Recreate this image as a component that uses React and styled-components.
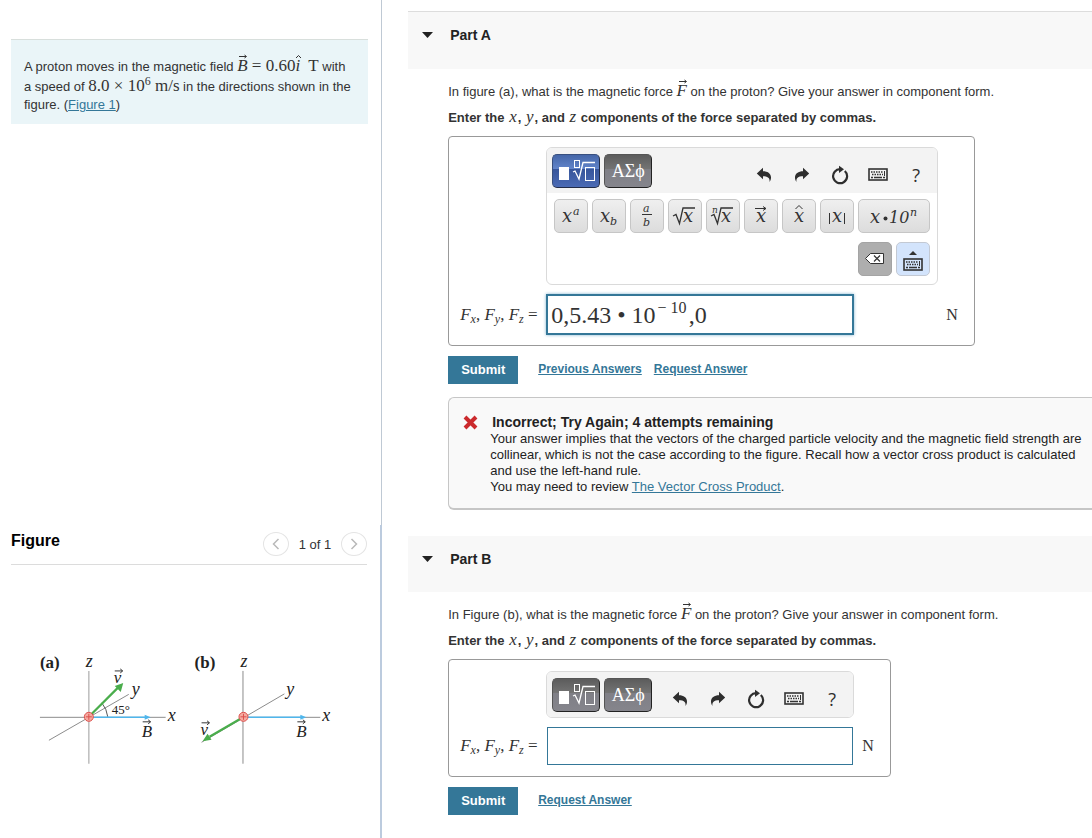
import React, { useState } from "react";
import styled, { createGlobalStyle, css } from "styled-components";

const sans = '"Liberation Sans", Arial, Helvetica, sans-serif';
const serif = '"Liberation Serif", "Times New Roman", serif';
const slab = '"DejaVu Serif", "Liberation Serif", serif';
const blue = "#347798";

const GlobalStyle = createGlobalStyle`
  * { box-sizing: border-box; }
  body { margin: 0; background: #fff; color: #333; font: 13px/16px ${sans}; }
  button, input { font: inherit; color: inherit; }
  a { color: ${blue}; }
  h2, p { margin: 0; }
`;

const Page = styled.div`
  display: grid;
  grid-template-columns: 35% minmax(0, 1fr);
  min-height: 100vh;
`;

/* ---------- left column ---------- */

const Side = styled.aside`
  display: flex;
  flex-direction: column;
`;

const ProblemPane = styled.section`
  min-height: 525px;
  padding: 39px 13px 0 11px;
  border-right: 1px solid #bfc9d4;
`;

const Problem = styled.p`
  padding: 16px 14px 11px 13px;
  border-top: 1px solid #d8dfdc;
  background: #eaf5f8;
  line-height: 17px;
`;

const FigurePane = styled.section`
  flex: 1;
  padding: 6px 13px 0 11px;
  border-right: 2px solid #bccbde;
`;

const FigureHead = styled.header`
  display: flex;
  align-items: center;
  justify-content: space-between;
  height: 34px;
  padding-bottom: 8px;
  border-bottom: 1px solid #dcdcdc;
`;

const FigureTitle = styled.h2`
  padding-bottom: 6px;
  font-size: 16px;
  line-height: 18px;
  color: #000;
`;

const Pager = styled.nav`
  display: flex;
  align-items: center;
  gap: 10px;
`;

const PagerButton = styled.button`
  display: grid;
  place-items: center;
  width: 26px;
  height: 24px;
  padding: 0;
  border: 1px solid #e4e4e4;
  border-radius: 50%;
  background: #fff;
`;

const PagerText = styled.span`
  padding-top: 3px;
`;

const Diagrams = styled.svg`
  display: block;
  width: 100%;
  max-width: 357px;
  margin-top: 76px;
  font-family: ${serif};
`;

/* ---------- right column ---------- */

const Main = styled.main`
  padding: 11px 0 20px 26px;
`;

const PartHeader = styled.header`
  display: flex;
  align-items: flex-start;
  gap: 16px;
  height: ${(p) => (p.$first ? "58px" : "56px")};
  padding: 15px 13px;
  border-top: ${(p) => (p.$first ? "1px solid #ddd" : "0")};
  background: #f8f8f8;
`;

const Toggle = styled.button`
  display: grid;
  place-items: center;
  width: 13px;
  height: 16px;
  padding: 0;
  border: 0;
  background: none;
`;

const PartTitle = styled.h2`
  font-size: 14px;
  line-height: 16px;
  color: #222;
`;

const PartBody = styled.div`
  padding: 10px 0 26px 40px;
`;

const Question = styled.p`
  line-height: 26px;
  font-weight: ${(p) => (p.$strong ? "bold" : "normal")};
`;

const AnswerBox = styled.div`
  display: grid;
  grid-template-columns: 86px auto auto;
  row-gap: 9px;
  align-items: center;
  width: fit-content;
  margin-top: 5px;
  padding: ${(p) => (p.$wide ? "10px" : "11px")} 16px ${(p) => (p.$wide ? "10px" : "11px")} 11px;
  border: 1px solid #999;
  border-radius: 4px;
`;

const Editor = styled.div`
  grid-column: 2;
  overflow: hidden;
  width: ${(p) => (p.$wide ? "392px" : "308px")};
  border: 1px solid #dadada;
  border-radius: 6px;
  background: #fff;
`;

const Bar = styled.div`
  display: flex;
  justify-content: space-between;
  align-items: center;
  height: 45px;
  padding: 0 2px 0 5px;
  background: #f3f3f3;
`;

const Group = styled.div`
  display: flex;
  gap: ${(p) => (p.$tight ? "0" : "4px")};
  padding-top: ${(p) => (p.$tight ? "8px" : "0")};
`;

const PaletteButton = styled.button`
  display: grid;
  place-items: center;
  width: 48px;
  height: 34px;
  padding: 0;
  border: 1px solid #333;
  border-radius: 5px;
  color: #fff;
  font: 18px/18px ${serif};
  background: ${(p) =>
    p.$active
      ? "linear-gradient(#4566a8, #6285cb 44%, #37559b 45%, #4b6bb5)"
      : "linear-gradient(#5c5c5c, #747474 44%, #7f7f86 45%, #85858c)"};
  border-color: ${(p) => (p.$active ? "#39507f #222c48 #222c48 #39507f" : "#555 #222 #222 #555")};
`;

const ToolButton = styled.button`
  display: grid;
  place-items: center;
  width: 38px;
  height: 28px;
  padding: 0;
  border: 0;
  background: none;
  color: #2e2e2e;
  font: 18px/20px "Open Sans", ${sans};
`;

const Keys = styled.div`
  display: flex;
  flex-wrap: wrap;
  justify-content: flex-end;
  gap: 9px 4px;
  padding: 6px 7px 8px;
`;

const keyTone = {
  plain: css`background: linear-gradient(#efefef, #dcdcdc); border-color: #c6c6c6;`,
  dark: css`background: #aeaeae; border-color: #a4a4a4;`,
  pale: css`background: #d3e4fc; border-color: #c3c9d3;`,
};

const Key = styled.button`
  width: ${(p) => (p.$wide ? "72px" : "34px")};
  height: 34px;
  padding: 0;
  border: 1px solid;
  border-radius: 5px;
  ${(p) => keyTone[p.$tone || "plain"]}
  svg {
    display: block;
    margin: -1px;
    font-family: ${slab};
    font-style: italic;
    fill: #333;
  }
`;

const FieldLabel = styled.label`
  grid-column: 1;
  font: 17px/20px ${serif};
  white-space: nowrap;
  sub {
    font-size: 12px;
    line-height: 0;
    vertical-align: -3px;
  }
`;

const Field = styled.div`
  grid-column: 2;
  display: flex;
  align-items: center;
  width: ${(p) => (p.$focused ? "308px" : "306px")};
  height: ${(p) => (p.$focused ? "41px" : "38px")};
  margin-left: ${(p) => (p.$focused ? "0" : "1px")};
  padding: 0 3px;
  border: ${(p) => (p.$focused ? "2px" : "1px")} solid ${blue};
  box-shadow: ${(p) => (p.$focused ? "0 0 3px #7fb2cf" : "none")};
  background: #fff;
`;

const Entry = styled.span`
  font: 24px/30px ${serif};
  white-space: nowrap;
  sup {
    margin: 0 2px;
    font-size: 16px;
    line-height: 0;
    vertical-align: 10px;
  }
`;

const FieldInput = styled.input`
  flex: 1;
  min-width: 0;
  height: 100%;
  padding: 0;
  border: 0;
  outline: 0;
  background: none;
  font: 24px/30px ${serif};
`;

const Unit = styled.span`
  grid-column: 3;
  margin-left: 8px;
  font: 16px/20px ${serif};
`;

const Actions = styled.div`
  display: flex;
  align-items: center;
  gap: 12px;
  margin-top: 10px;
  font-size: 12px;
  font-weight: bold;
  a {
    padding-bottom: 2px;
  }
`;

const Submit = styled.button`
  width: 70px;
  height: 28px;
  margin-right: 8px;
  padding: 0;
  border: 0;
  background: ${blue};
  color: #fff;
  font-size: 13px;
`;

const Feedback = styled.section`
  display: grid;
  grid-template-columns: 27px 1fr;
  margin-top: 13px;
  padding: 16px 8px 13px 14px;
  border: solid #c6c6c6;
  border-width: 1px 0 2px 1px;
  border-radius: 6px 0 0 6px;
  background: #f9f9f9;
  color: #222;
`;

const FeedbackTitle = styled.h2`
  padding-left: 2px;
  font-size: 14px;
  line-height: 17px;
`;

/* ---------- math ---------- */

const Math = styled.span`
  font: 17px/20px ${serif};
  white-space: nowrap;
  sup {
    font-size: 12px;
    line-height: 0;
    vertical-align: 6px;
  }
`;

const Variable = styled.i`
  padding: 0 1px;
  font: italic 17px/20px ${serif};
`;

const Accented = styled.span`
  position: relative;
  display: inline-block;
  font-style: italic;
`;

const Accent = styled.svg`
  position: absolute;
  left: 50%;
  top: -2px;
  width: 10px;
  height: 5px;
  margin-left: -4px;
  fill: none;
  stroke: currentColor;
`;

const Vec = ({ children }) => (
  <Accented>
    {children}
    <Accent viewBox="0 0 10 5"><path d="M1 2.500h7M6.500 1l2 1.500-2 1.500" /></Accent>
  </Accented>
);

const Hat = ({ children }) => (
  <Accented>
    {children}
    <Accent viewBox="0 0 10 5"><path d="M2 4l2.500-2.500L7 4" /></Accent>
  </Accented>
);

/* ---------- icons ---------- */

const TemplateIcon = () => (
  <svg width="40" height="26" viewBox="0 0 40 26" fill="none" stroke="#fff">
    <rect x="3" y="9" width="10" height="13" fill="#fff" stroke="none" />
    <rect x="18.500" y="2.500" width="5" height="7" />
    <path d="M17 14l2-1 4 8L27 4.500h12" strokeWidth="1.300" />
    <rect x="29.500" y="9.500" width="9" height="13" />
  </svg>
);

const UndoIcon = ({ flip }) => (
  <svg width="16" height="16" viewBox="0 0 16 16">
    <path
      d="M.8 6.500L7 .8v3.500c4.500 0 8.200 2.200 8 6.400 0 1.500-.6 3-1.500 4.200.6-3.700-1.500-5.700-6.500-5.700v3z"
      fill="currentColor"
      transform={flip ? "matrix(-1 0 0 1 16 0)" : undefined}
    />
  </svg>
);

const ResetIcon = () => (
  <svg width="18" height="20" viewBox="0 0 18 20" fill="none" stroke="currentColor">
    <path d="M9.500 4.200A7 7 0 1 0 13.800 6" strokeWidth="2.200" />
    <path d="M8 .8l5 3.400-5 3.800z" fill="currentColor" stroke="none" />
  </svg>
);

const KeyboardShape = () => (
  <g fill="none" stroke="#333">
    <rect x="1" y="1" width="18" height="11" strokeWidth="1.600" />
    <path d="M3 4h12M4 6.500h11" strokeWidth="1.500" strokeDasharray="1.500 1" />
    <path d="M3 9.500h2M6 9.500h8M15 9.500h2" strokeWidth="1.500" />
    <path d="M16.500 3v5" strokeWidth="1" />
  </g>
);

const KeyboardIcon = () => (
  <svg width="20" height="13" viewBox="0 0 20 13"><KeyboardShape /></svg>
);

const Chevron = ({ right }) => (
  <svg width="8" height="12" viewBox="0 0 8 12" fill="none" stroke="#b9b9b9" strokeWidth="1.500">
    <path d={right ? "M1.500 1l5 5-5 5" : "M6.500 1l-5 5 5 5"} />
  </svg>
);

const Cap = ({ children, w = 34 }) => (
  <svg width={w} height="34" viewBox={`0 0 ${w} 34`}>{children}</svg>
);

const keys = [
  { name: "Exponent", art: <><text x="8" y="23" fontSize="18">x</text><text x="19" y="16" fontSize="11">a</text></> },
  { name: "Subscript", art: <><text x="8" y="23" fontSize="18">x</text><text x="18" y="26" fontSize="11">b</text></> },
  { name: "Fraction", art: <><text x="13" y="13" fontSize="11">a</text><path d="M12 15.500h10" stroke="#333" /><text x="13" y="27" fontSize="11">b</text></> },
  { name: "Square root", art: <><path d="M5 17l3-1.500 3.500 9L15 9h12" fill="none" stroke="#333" strokeWidth="1.300" /><text x="15" y="23" fontSize="18">x</text></> },
  { name: "Nth root", art: <><text x="6" y="14" fontSize="9">n</text><path d="M5 17l3-1.500 3.500 9L15 9h12" fill="none" stroke="#333" strokeWidth="1.300" /><text x="15" y="23" fontSize="18">x</text></> },
  { name: "Vector", art: <><path d="M11 9.500h11M19 7.500l3 2-3 2" fill="none" stroke="#333" /><text x="12" y="23" fontSize="18">x</text></> },
  { name: "Unit vector", art: <><path d="M13.500 10l3.500-3.500 3.500 3.500" fill="none" stroke="#333" /><text x="12" y="23" fontSize="18">x</text></> },
  { name: "Absolute value", art: <><path d="M9.500 14v11M24.500 14v11" stroke="#333" /><text x="12" y="23" fontSize="18">x</text></> },
  { name: "Scientific notation", wide: true, art: <><text x="12" y="24" fontSize="18">x</text><circle cx="27.500" cy="19.500" r="2" /><text x="31" y="24" fontSize="16">10</text><text x="52" y="17" fontSize="11">n</text></> },
  {
    name: "Delete", tone: "dark",
    art: <><path d="M7.500 16.500l5-5h13v10h-13z" fill="#fff" stroke="#333" /><path d="M16 13.500l6 6M22 13.500l-6 6" stroke="#333" strokeWidth="1.200" /></>,
  },
  {
    name: "Hide keyboard", tone: "pale",
    art: <><path d="M13 13l4-4 4 4z" /><g transform="translate(7 16)"><KeyboardShape /></g></>,
  },
];

/* ---------- figure ---------- */

const Arrow = ({ x, y, lift, children }) => (
  <>
    <text x={x} y={y} fontSize="17" fontStyle="italic">{children}</text>
    <path d={`M${x + 1} ${y - lift}h7.500m-2-2l2.500 2-2.500 2`} fill="none" stroke="#222" strokeWidth=".9" />
  </>
);

const Proton = ({ x }) => (
  <g stroke="#dc4f4c">
    <circle cx={x} cy="76" r="4.500" fill="#f5aaa0" />
    <path d={`M${x - 3} 76h6M${x} 73v6`} />
  </g>
);

const Figure = () => (
  <Diagrams viewBox="0 0 357 130" fill="#222" role="img" aria-label="Proton velocity and magnetic field directions">
    <g fill="none" stroke="#8c8c8c">
      <path d="M29 76.500h126" />
      <path d="M78 30v93" stroke="#bdbdbd" strokeWidth="1.500" />
      <path d="M38 99.500L118 53.500" />
      <path d="M91 62q5 6 6 14" stroke="#555" />
      <path d="M232.500 30v93M233 76.500h77M191 101.500L274 53" />
    </g>
    <g stroke="#4fb6ec" fill="#4fb6ec">
      <path d="M82 76.500h54M237 76.500h54" strokeWidth="1.500" />
      <path d="M134 74l6 2.500-6 2.500zM290 74l6 2.500-6 2.500z" stroke="none" />
    </g>
    <g stroke="#4aad4c" fill="#4aad4c">
      <path d="M80 74l27-27M230 78l-31 18" strokeWidth="2.200" />
      <path d="M112.500 42l-2.500 9-6-6zM192 100.500l5-7.500 4 6z" stroke="none" />
    </g>
    <Proton x={78} />
    <Proton x={233} />
    <g fontSize="17" fontWeight="bold">
      <text x="29" y="27">(a)</text>
      <text x="184" y="27">(b)</text>
    </g>
    <g fontSize="18" fontStyle="italic">
      <text x="75" y="26">z</text>
      <text x="230" y="26">z</text>
      <text x="121" y="54">y</text>
      <text x="276" y="54">y</text>
      <text x="157" y="80">x</text>
      <text x="312" y="80">x</text>
    </g>
    <text x="101" y="73" fontSize="13">45°</text>
    <Arrow x={103} y={42} lift={12}>v</Arrow>
    <Arrow x={131} y={96} lift={15}>B</Arrow>
    <Arrow x={190} y={94} lift={12}>v</Arrow>
    <Arrow x={286} y={96} lift={15}>B</Arrow>
  </Diagrams>
);

/* ---------- answer area ---------- */

const Answer = ({ id, wide, entry }) => {
  const [value, setValue] = useState("");
  return (
    <AnswerBox $wide={wide}>
      <Editor $wide={wide}>
        <Bar>
          <Group>
            <PaletteButton $active={wide} aria-label="Templates"><TemplateIcon /></PaletteButton>
            <PaletteButton>ΑΣϕ</PaletteButton>
          </Group>
          <Group $tight>
            <ToolButton aria-label="Undo"><UndoIcon /></ToolButton>
            <ToolButton aria-label="Redo"><UndoIcon flip /></ToolButton>
            <ToolButton aria-label="Reset"><ResetIcon /></ToolButton>
            <ToolButton aria-label="Keyboard shortcuts"><KeyboardIcon /></ToolButton>
            <ToolButton>?</ToolButton>
          </Group>
        </Bar>
        {wide && (
          <Keys>
            {keys.map((k) => (
              <Key key={k.name} aria-label={k.name} $wide={k.wide} $tone={k.tone}>
                <Cap w={k.wide ? 72 : 34}>{k.art}</Cap>
              </Key>
            ))}
          </Keys>
        )}
      </Editor>
      <FieldLabel htmlFor={id}>
        <i>F<sub>x</sub></i>, <i>F<sub>y</sub></i>, <i>F<sub>z</sub></i> =
      </FieldLabel>
      <Field $focused={wide}>
        {entry && <Entry>{entry}</Entry>}
        <FieldInput id={id} value={value} onChange={(e) => setValue(e.target.value)} />
      </Field>
      <Unit>N</Unit>
    </AnswerBox>
  );
};

const PartTop = ({ title, first }) => (
  <PartHeader $first={first}>
    <Toggle aria-label={`Toggle ${title}`}>
      <svg width="11" height="6" viewBox="0 0 11 6"><path d="M0 0h11L5.500 6z" fill="#222" /></svg>
    </Toggle>
    <PartTitle>{title}</PartTitle>
  </PartHeader>
);

const Ask = ({ where }) => (
  <>
    <Question>
      In {where}, what is the magnetic force <Math><Vec>F</Vec></Math> on the proton? Give your answer in component form.
    </Question>
    <Question $strong>
      Enter the <Variable>x</Variable>, <Variable>y</Variable>, and <Variable>z</Variable> components of the force
      separated by commas.
    </Question>
  </>
);

export default function App() {
  return (
    <Page>
      <GlobalStyle />
      <Side>
        <ProblemPane>
          <Problem>
            A proton moves in the magnetic field <Math><Vec>B</Vec> = 0.60<Hat>i</Hat>&nbsp; T</Math> with a speed of{" "}
            <Math>8.0 × 10<sup>6</sup> m/s</Math> in the directions shown in the figure. (<a href="#figure">Figure 1</a>)
          </Problem>
        </ProblemPane>
        <FigurePane id="figure">
          <FigureHead>
            <FigureTitle>Figure</FigureTitle>
            <Pager>
              <PagerButton aria-label="Previous figure"><Chevron /></PagerButton>
              <PagerText>1 of 1</PagerText>
              <PagerButton aria-label="Next figure"><Chevron right /></PagerButton>
            </Pager>
          </FigureHead>
          <Figure />
        </FigurePane>
      </Side>
      <Main>
        <PartTop title="Part A" first />
        <PartBody>
          <Ask where="figure (a)" />
          <Answer id="answer-a" wide entry={<>0,5.43 • 10<sup>− 10</sup>,0</>} />
          <Actions>
            <Submit>Submit</Submit>
            <a href="#previous">Previous Answers</a>
            <a href="#request-a">Request Answer</a>
          </Actions>
          <Feedback>
            <svg width="16" height="16" viewBox="0 0 16 16">
              <path d="M2 3l11 11M13 3L2 14" stroke="#cb2a2d" strokeWidth="4" />
            </svg>
            <div>
              <FeedbackTitle>Incorrect; Try Again; 4 attempts remaining</FeedbackTitle>
              <p>
                Your answer implies that the vectors of the charged particle velocity and the magnetic field strength are
                collinear, which is not the case according to the figure. Recall how a vector cross product is calculated
                and use the left-hand rule.
              </p>
              <p>You may need to review <a href="#review">The Vector Cross Product</a>.</p>
            </div>
          </Feedback>
        </PartBody>
        <PartTop title="Part B" />
        <PartBody>
          <Ask where="Figure (b)" />
          <Answer id="answer-b" />
          <Actions>
            <Submit>Submit</Submit>
            <a href="#request-b">Request Answer</a>
          </Actions>
        </PartBody>
      </Main>
    </Page>
  );
}
